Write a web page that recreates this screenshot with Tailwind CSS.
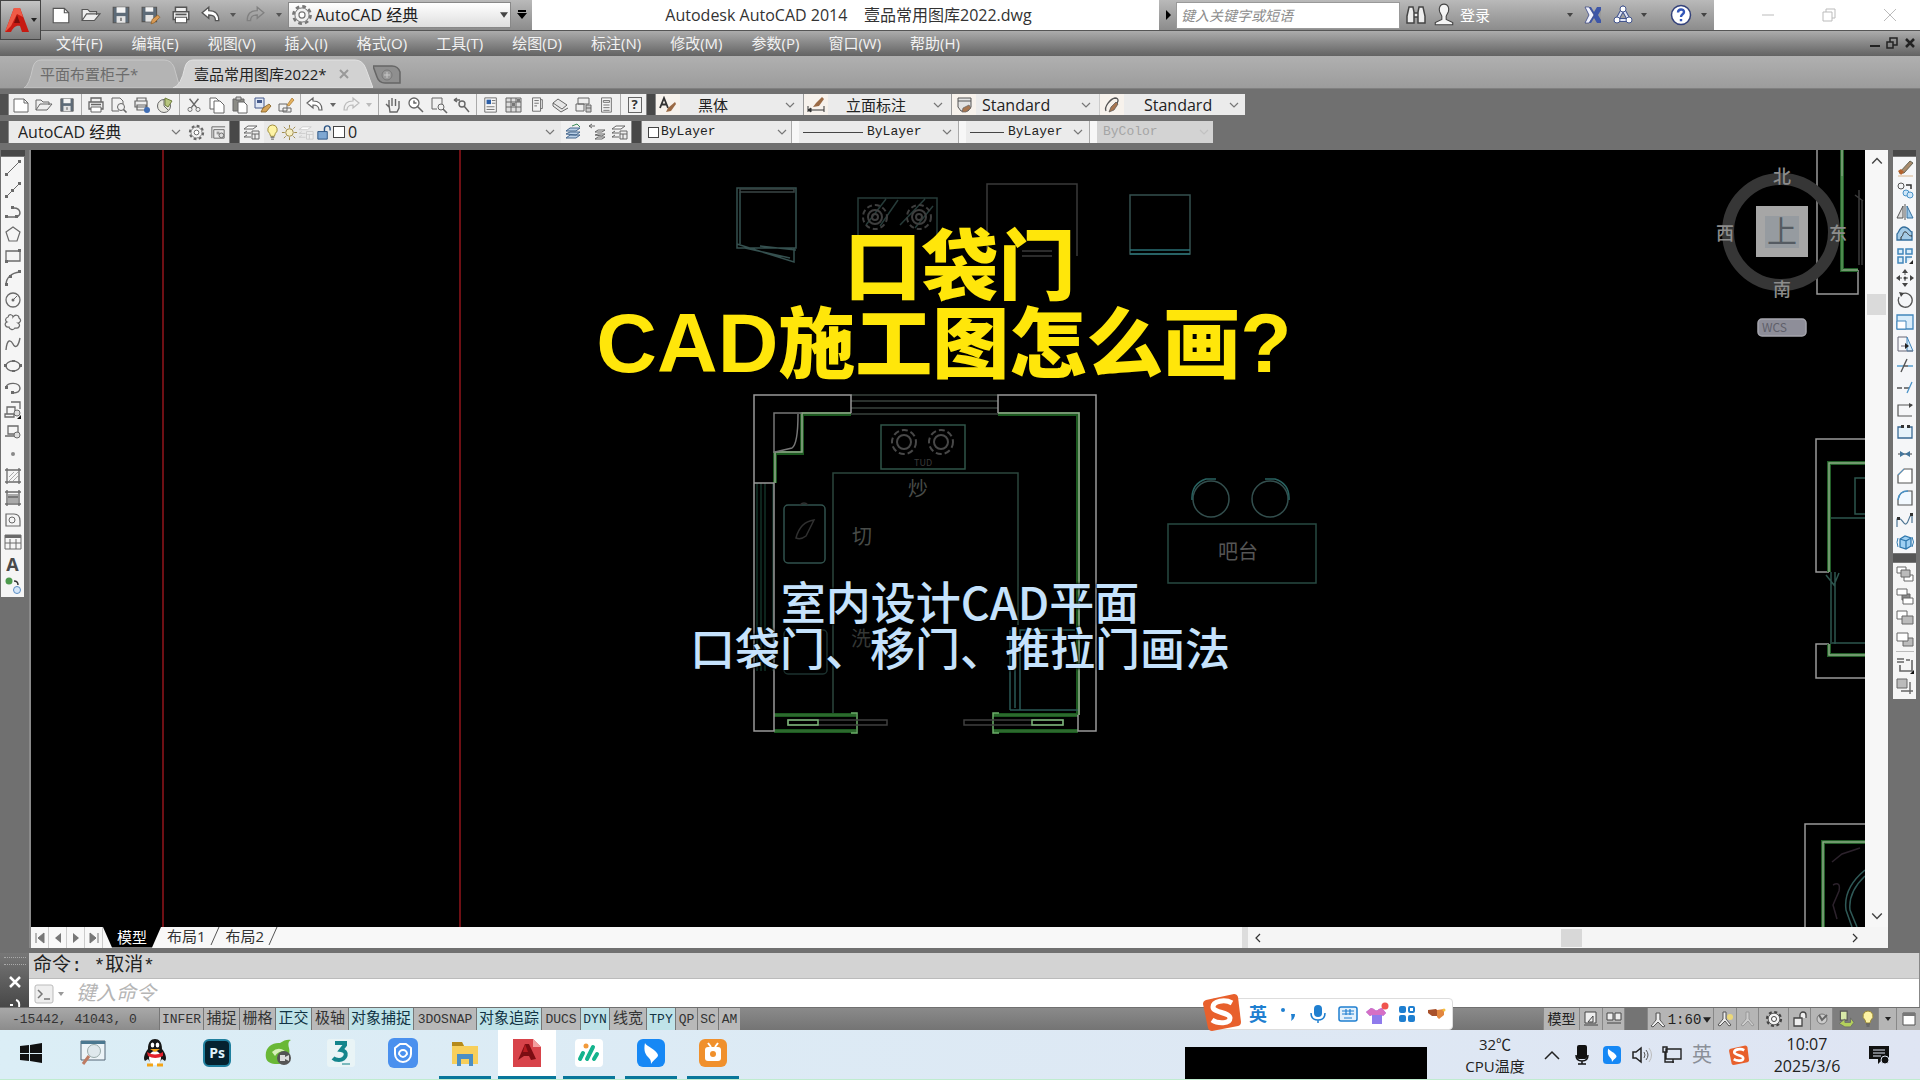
<!DOCTYPE html>
<html lang="zh-CN">
<head>
<meta charset="utf-8">
<meta name="viewport" content="width=device-width, initial-scale=1">
<title>Autodesk AutoCAD 2014 壹品常用图库2022.dwg</title>
<script src="https://cdn.jsdelivr.net/npm/@tailwindcss/browser@4"></script>
</head>
<body class="relative flex min-h-screen flex-col overflow-x-hidden bg-[#707070] font-['Open_Sans','Noto_Sans_CJK_SC',sans-serif] text-[15px] leading-5 text-[#222]">

<!-- Shared icon symbols -->
<svg class="hidden" aria-hidden="true">
  <defs>
    <symbol id="new" viewBox="0 0 18 18"><path d="M2 3h10l4 4v9H2z" fill="#fff" stroke="currentColor"/><path d="M12 3v4h4" fill="none" stroke="currentColor"/></symbol>
    <symbol id="open" viewBox="0 0 18 18"><path d="M1 14V4h5l2 2h6v3M1 14l4-6h12l-5 6z" fill="#eee" stroke="currentColor"/></symbol>
    <symbol id="save" viewBox="0 0 18 18"><path d="M2 2h14v14H2z" fill="#5d6b78" stroke="currentColor"/><path d="M5 2h8v5H5z" fill="#f4f4f4"/><path d="M5 10h8v6H5z" fill="#e4e4e4"/><path d="M9 11.500v3" stroke="#444"/></symbol>
    <symbol id="saveas" viewBox="0 0 18 18"><path d="M1 2h13v13H1z" fill="#5d6b78" stroke="currentColor"/><path d="M4 2h7v4H4z" fill="#f4f4f4"/><path d="M4 9h7v6H4z" fill="#e4e4e4"/><path d="M9 17l1-4 5-4 2 2-5 5z" fill="#d99a55" stroke="#8a5a20" stroke-width=".6"/></symbol>
    <symbol id="print" viewBox="0 0 18 18"><path d="M4 6V2h10v4M2 6h14v7H2z" fill="#eee" stroke="currentColor" stroke-width="1.300"/><path d="M4 11h10v5H4z" fill="#fff" stroke="currentColor"/><path d="M4 8.500h10" stroke="currentColor" stroke-width="1.500"/></symbol>
    <symbol id="preview" viewBox="0 0 18 18"><path d="M9 15H2V2h8l3 3v3" fill="none" stroke="currentColor"/><circle cx="11" cy="11" r="3.500" fill="none" stroke="currentColor"/><path d="M13.500 13.500l3 3" stroke="currentColor" stroke-width="1.600"/></symbol>
    <symbol id="publish" viewBox="0 0 18 18"><path d="M4 5V2h9v3M2 5h12v6H2zM4 9h9v5H4z" fill="#eee" stroke="currentColor" stroke-width="1.200"/><circle cx="14" cy="14" r="3" fill="#3f6db5"/></symbol>
    <symbol id="globe" viewBox="0 0 18 18"><circle cx="8" cy="10" r="6.500" fill="#e8e8e0" stroke="currentColor"/><path d="M8 10V4M8 10l4 4" stroke="currentColor"/><path d="M9 2l7 3-4 6-3-2z" fill="#b7c67e" stroke="#6e7d3c"/></symbol>
    <symbol id="cut" viewBox="0 0 18 18"><path d="M4 2l8 10M14 2L6 12" stroke="currentColor" stroke-width="1.600"/><circle cx="4.500" cy="14" r="2.300" fill="none" stroke="currentColor"/><circle cx="13.500" cy="14" r="2.300" fill="none" stroke="currentColor"/></symbol>
    <symbol id="copy" viewBox="0 0 18 18"><path d="M2 2h6l3 3v8H2z" fill="#fff" stroke="currentColor"/><path d="M6 5h6l4 4v8H6z" fill="#fff" stroke="currentColor"/></symbol>
    <symbol id="paste" viewBox="0 0 18 18"><path d="M2 3h11v12H2z" fill="#8b8b85" stroke="currentColor"/><path d="M5 1h5v3H5z" fill="#ccc" stroke="currentColor"/><path d="M7 6h6l3 3v8H7z" fill="#fff" stroke="currentColor"/></symbol>
    <symbol id="match" viewBox="0 0 18 18"><path d="M1 2h9v10H1z" fill="#dfe7f5" stroke="#44598a"/><path d="M3 4h5v3H3z" fill="#44598a"/><path d="M7 16l2-4 6-4 2 2-5 6z" fill="#d7a558" stroke="#7f5a1d" stroke-width=".8"/></symbol>
    <symbol id="block" viewBox="0 0 18 18"><path d="M2 8h8v7H2zM6 12h8v4H6z" fill="none" stroke="currentColor"/><path d="M10 9l5-7 2 2-5 6z" fill="#e5b260" stroke="#a3742b" stroke-width=".7"/></symbol>
    <symbol id="undo" viewBox="0 0 18 18"><path d="M1 7l6-5v3c6 0 9 3 9 9h-3c0-4-2-5-6-5v3z" fill="#fff" stroke="currentColor" stroke-width="1.200"/></symbol>
    <symbol id="redo" viewBox="0 0 18 18"><path d="M17 7l-6-5v3c-6 0-9 3-9 9h3c0-4 2-5 6-5v3z" fill="none" stroke="currentColor" stroke-width="1.200"/></symbol>
    <symbol id="pan" viewBox="0 0 18 18"><path d="M5 11L2 8m3 3V4m0 5l1 7h7l2-4V5m-7 5V2m3.500 8V3M15 5v5" fill="none" stroke="currentColor" stroke-width="1.400"/></symbol>
    <symbol id="zoom" viewBox="0 0 18 18"><circle cx="7" cy="7" r="5" fill="#fff" stroke="currentColor" stroke-width="1.300"/><path d="M10 10l6 6M7 4.500V7h2.500" fill="none" stroke="currentColor" stroke-width="1.500"/></symbol>
    <symbol id="zoomwin" viewBox="0 0 18 18"><path d="M2 2h10v6M2 2v11h5" fill="none" stroke="currentColor"/><circle cx="11" cy="11" r="3" fill="none" stroke="currentColor"/><path d="M13 13l4 4" stroke="currentColor" stroke-width="1.600"/></symbol>
    <symbol id="zoomprev" viewBox="0 0 18 18"><circle cx="9" cy="8" r="3" fill="none" stroke="currentColor" stroke-width="1.400"/><path d="M11 10l5 6M1 4h6M1 4l3-2M1 4l3 2" fill="none" stroke="currentColor" stroke-width="1.500"/></symbol>
    <symbol id="props" viewBox="0 0 18 18"><path d="M2 1h13v16H2z" fill="#f7f7f7" stroke="currentColor"/><path d="M4 3h5v5H4z" fill="#2c5fa8"/><path d="M10 4h4M10 7h4M4 11h9M4 14h9" stroke="currentColor"/></symbol>
    <symbol id="dc" viewBox="0 0 18 18"><path d="M1 2h15v14H1zM6 2v14M11 2v14M1 6h15M1 11h15" fill="#ddd" stroke="currentColor"/><path d="M7 7h3v3H7zM12 3h3v3h-3z" fill="#777"/></symbol>
    <symbol id="palette" viewBox="0 0 18 18"><path d="M4 1h9v15H4z" fill="#f2f2f2" stroke="currentColor"/><path d="M6 4h5M6 7h5M6 10h3" stroke="currentColor"/><path d="M13 3h2v10h-2" fill="none" stroke="currentColor"/></symbol>
    <symbol id="sheet" viewBox="0 0 18 18"><path d="M2 7l5-4 9 6-5 4zM2 10l8 6 7-4M2 7v3" fill="#e6e6e6" stroke="currentColor"/></symbol>
    <symbol id="markup" viewBox="0 0 18 18"><path d="M4 2h11v6H4zM2 8h8v7H2z" fill="#eee" stroke="currentColor"/><path d="M12 9h5v7h-5zM12 12h5" fill="#ccc" stroke="currentColor"/></symbol>
    <symbol id="calc" viewBox="0 0 18 18"><path d="M4 1h11v16H4z" fill="#f5f5f5" stroke="currentColor"/><path d="M6 4h7v2H6zM6 9h7M6 12h7M6 15h7" fill="none" stroke="currentColor"/></symbol>
    <symbol id="gear" viewBox="0 0 18 18"><circle cx="9" cy="9" r="7" fill="none" stroke="currentColor" stroke-width="2.200" stroke-dasharray="3 2.500"/><circle cx="9" cy="9" r="5.800" fill="#f2f2f2" stroke="currentColor" stroke-width=".8"/><circle cx="9" cy="9" r="2.500" fill="#fff" stroke="currentColor"/></symbol>
    <symbol id="ws" viewBox="0 0 18 18"><path d="M2 3h14M4 6h11v9H4zM2 3v12" fill="none" stroke="currentColor"/><path d="M7 8h3v3H7z" fill="#999"/><circle cx="12" cy="12" r="2.500" fill="#ddd" stroke="currentColor"/></symbol>
    <symbol id="layers" viewBox="0 0 18 18"><path d="M1 6l4-3h9l-4 3zM1 10l3-2M1 14l3-2M1 10h7M1 14h7" fill="#fff" stroke="currentColor"/><path d="M9 8h7v8H9zM9 11h7M12 11v5" fill="#eee" stroke="currentColor"/></symbol>
    <symbol id="layerblue" viewBox="0 0 18 18"><path d="M2 8l4-3h10l-4 3zM2 11l4-2h10l-4 3zM2 15l4-3h10l-4 3z" fill="#b9cfe6" stroke="#44668c"/><path d="M8 3l5-2 3 3" fill="none" stroke="#3a8a55"/></symbol>
    <symbol id="layerprev" viewBox="0 0 18 18"><path d="M1 3h6M1 3l3-2M1 3l3 2M7 9l3-2h7l-3 2zM7 12l3-1h7l-3 2zM7 16l3-2h7l-3 2z" fill="none" stroke="currentColor"/></symbol>
    <symbol id="bulb" viewBox="0 0 18 18"><path d="M9 1a5 5 0 0 1 3 9l-1 3H7l-1-3a5 5 0 0 1 3-9z" fill="#fdf3a4" stroke="#9b8a3a"/><path d="M7 14h4M7.500 16h3" stroke="#555"/></symbol>
    <symbol id="sun" viewBox="0 0 18 18"><circle cx="9" cy="9" r="4" fill="#f6efc4" stroke="#9c8745"/><path d="M9 1v3M9 14v3M1 9h3M14 9h3M3 3l2 2M13 13l2 2M15 3l-2 2M3 15l2-2" stroke="#9c8745"/></symbol>
    <symbol id="lockblue" viewBox="0 0 18 18"><path d="M3 8h10v8H3z" fill="#7ea7d2" stroke="#2b5484"/><path d="M10 8V5a3 3 0 0 1 6 0v2" fill="none" stroke="#2b5484" stroke-width="1.500"/></symbol>
    <symbol id="chev" viewBox="0 0 10 10"><path d="M1 3l4 4 4-4" fill="none" stroke="currentColor" stroke-width="1.200"/></symbol>
    <symbol id="dot" viewBox="0 0 6 6"><path d="M0 1h6L3 5z" fill="currentColor"/></symbol>
    <symbol id="order" viewBox="0 0 18 18"><path d="M1 2h9v6H1z" fill="#fff" stroke="currentColor"/><path d="M8 10h9v6H8z" fill="#fff" stroke="currentColor"/><path d="M5 5h9v7H5z" fill="#bbb" stroke="currentColor"/></symbol>
    <symbol id="orderb" viewBox="0 0 18 18"><path d="M6 7h8v6H6z" fill="#888" stroke="currentColor"/><path d="M1 2h10v6H1zM7 11h10v6H7z" fill="#fff" stroke="currentColor"/></symbol>
    <symbol id="orderc" viewBox="0 0 18 18"><path d="M1 2h10v8H1z" fill="#fff" stroke="currentColor"/><path d="M6 7h11v8H6z" fill="#bbb" stroke="currentColor"/></symbol>
    <symbol id="orderd" viewBox="0 0 18 18"><path d="M7 7h10v8H7z" fill="#bbb" stroke="currentColor"/><path d="M1 2h11v8H1z" fill="#fff" stroke="currentColor"/></symbol>
    <symbol id="sogou" viewBox="0 0 38 38"><path d="M3 7L31 1q3 0 4 3l3 25q0 3-3 4L9 38q-3 0-4-3L0 11q0-3 3-4z" fill="#e8602c"/><path d="M29 10C22 6 10 8 10 14s17 5 17 11-12 6-18 2" fill="none" stroke="#fff" stroke-width="5"/></symbol>
    <symbol id="bird" viewBox="0 0 28 28"><rect width="28" height="28" rx="6" fill="#1688f5"/><path d="M8 4c1 3 12 7 13 12 0 3-4 4-7 9 0-4-1-5-3-7-4-4-4-9-3-14z" fill="#fff"/></symbol>
  </defs>
</svg>

<!-- Title bar -->
<header class="flex h-[31px] shrink-0 items-stretch border-b border-[#555] bg-white">
  <div class="flex flex-none items-center bg-linear-to-b from-[#b9b9b9] to-[#8c8c8c] text-[#555]">
    <button aria-label="应用程序菜单" class="z-10 -mb-2.5 flex h-10 w-[41px] flex-none items-center self-start border border-[#444] bg-linear-to-b from-[#c4c4c4] to-[#7d7d7d] pl-1">
      <svg class="h-8 w-6" viewBox="0 0 24 32"><path d="M0 28L9 4h6l9 24h-7l-2-6c-4-1-7 2-9 6z" fill="#c71a12"/><path d="M9 4h6l3 9-6-3-6 12-6 6z" fill="#ef5a46"/><path d="M12 11l3 8H9z" fill="#7c0d09"/></svg>
      <svg class="ml-0.5 size-1.5 text-[#222]"><use href="#dot"/></svg>
    </button>
    <div class="flex items-center pl-[5px]">
      <button aria-label="新建" class="grid w-[30px] place-items-center"><svg class="size-5"><use href="#new"/></svg></button>
      <button aria-label="打开" class="grid w-[30px] place-items-center"><svg class="size-5"><use href="#open"/></svg></button>
      <button aria-label="保存" class="grid w-[30px] place-items-center"><svg class="size-5"><use href="#save"/></svg></button>
      <button aria-label="另存为" class="grid w-[30px] place-items-center"><svg class="size-5"><use href="#saveas"/></svg></button>
      <button aria-label="打印" class="grid w-[30px] place-items-center"><svg class="size-5"><use href="#print"/></svg></button>
      <button aria-label="放弃" class="grid w-[30px] place-items-center"><svg class="size-5"><use href="#undo"/></svg></button>
      <svg class="mx-1 size-1.5"><use href="#dot"/></svg>
      <button aria-label="重做" class="grid w-[30px] place-items-center text-[#808080]"><svg class="size-5"><use href="#redo"/></svg></button>
      <svg class="mx-1.5 size-1.5"><use href="#dot"/></svg>
    </div>
    <div class="flex h-[26px] w-[223px] items-center gap-0.5 border border-[#888] bg-linear-to-b from-white to-[#dedede] px-0.5 text-[#777]">
      <svg class="size-[22px] flex-none"><use href="#gear"/></svg>
      <select aria-label="工作空间" class="min-w-0 flex-1 appearance-none bg-transparent text-[16px] text-[#222]"><option>AutoCAD 经典</option></select>
      <svg class="size-2 flex-none text-[#444]"><use href="#dot"/></svg>
    </div>
    <button aria-label="自定义" class="grid w-[21px] place-items-center text-black"><svg class="size-3" viewBox="0 0 12 12"><path d="M2 1h8v2H2zM1 4h10l-5 6z" fill="currentColor"/></svg></button>
  </div>
  <h1 class="flex min-w-0 flex-1 items-center justify-center truncate pl-1.5 text-[16px] whitespace-pre text-[#333]">Autodesk AutoCAD 2014    壹品常用图库2022.dwg</h1>
  <div class="flex flex-none items-center bg-linear-to-b from-[#b9b9b9] to-[#8c8c8c] text-[#444]">
    <button aria-label="展开搜索" class="grid w-[17px] place-items-center text-black"><svg class="size-2.5" viewBox="0 0 10 10"><path d="M3 0l5 5-5 5z" fill="currentColor"/></svg></button>
    <input aria-label="搜索" placeholder="键入关键字或短语" class="h-[27px] w-[224px] border border-[#999] bg-white px-1 text-[14px] italic placeholder:text-[#8c8c8c]">
    <button aria-label="查找" class="ml-1 grid w-6 place-items-center"><svg class="size-5" viewBox="0 0 20 20"><path d="M3 2h4l1 5v11H1v-7zM13 2h4l2 9v7h-7V7zM8 8h4v4H8z" fill="#eee" stroke="currentColor" stroke-width="1.500"/></svg></button>
    <button class="ml-1 flex w-[135px] items-center gap-1 text-[15px] text-white"><svg class="size-6" viewBox="0 0 22 22"><path d="M11 1c4 0 5 4 4 7l-2 4v3l6 3v2H3v-2l6-3v-3L7 8c-1-3 0-7 4-7z" fill="#f4f4f4" stroke="#444"/></svg>登录</button>
    <svg class="size-1.5"><use href="#dot"/></svg>
    <button aria-label="Exchange" class="ml-2 grid w-6 place-items-center"><svg class="size-[18px]" viewBox="0 0 18 18"><path d="M1 1h6l3 5 3-5h4v16h-4l-3-5-3 5H1l4-8z" fill="#3d56a8"/><path d="M1 1h4l5 8-5 8H1l4-8z" fill="#f1f3ff" stroke="#33417a" stroke-width=".7"/><path d="M17 4l-3 5 3 5z" fill="#9a9a9a"/></svg></button>
    <button aria-label="A360" class="ml-1.5 grid w-6 place-items-center"><svg class="size-5" viewBox="0 0 20 20"><path d="M10 4L4 15h12z" fill="none" stroke="#44568e" stroke-width="4"/><path d="M10 4L4 15h12z" fill="none" stroke="#dfe4f5" stroke-width="2"/><circle cx="10" cy="4" r="3" fill="#fff" stroke="#44568e"/><circle cx="4" cy="15" r="3" fill="#fff" stroke="#44568e"/><circle cx="16" cy="15" r="3" fill="#fff" stroke="#44568e"/></svg></button>
    <svg class="ml-1.5 size-1.5"><use href="#dot"/></svg>
    <button aria-label="帮助" class="ml-[22px] grid w-6 place-items-center"><svg class="size-[22px]" viewBox="0 0 22 22"><circle cx="11" cy="11" r="9.500" fill="#fff" stroke="#33417a" stroke-width="1.500"/><path d="M8 8.500c0-4 6-4 6-.5 0 2.500-3 2-3 5M11 15v2.200" fill="none" stroke="#3356b8" stroke-width="2.400"/></svg></button>
    <svg class="mr-[7px] ml-2 size-1.5"><use href="#dot"/></svg>
  </div>
  <div class="flex w-[206px] flex-none items-center justify-around pl-6 text-[#bbb]">
    <button aria-label="最小化" class="grid w-[50px] place-items-center"><svg class="size-3" viewBox="0 0 12 12"><path d="M0 6h12" stroke="currentColor"/></svg></button>
    <button aria-label="还原" class="grid w-[50px] place-items-center"><svg class="size-3.5" viewBox="0 0 14 14"><path d="M1 4h9v9H1zM4 4V1h9v9h-3" fill="none" stroke="currentColor"/></svg></button>
    <button aria-label="关闭" class="grid w-[50px] place-items-center"><svg class="size-3" viewBox="0 0 12 12"><path d="M0 0l12 12M12 0L0 12" stroke="currentColor"/></svg></button>
  </div>
</header>

<!-- Menu bar -->
<nav class="flex h-[25px] shrink-0 items-center gap-[29px] bg-linear-to-b from-[#acacac] to-[#636363] pr-1 pb-0.5 pl-14 text-[15px] whitespace-nowrap text-[#f2f2f2]">
  <a href="#">文件(F)</a><a href="#">编辑(E)</a><a href="#">视图(V)</a><a href="#">插入(I)</a><a href="#">格式(O)</a><a href="#">工具(T)</a><a href="#">绘图(D)</a><a href="#">标注(N)</a><a href="#">修改(M)</a><a href="#">参数(P)</a><a href="#">窗口(W)</a><a href="#">帮助(H)</a>
  <div class="ml-auto flex items-center gap-1.5 text-[#222]">
    <button aria-label="最小化图形"><svg class="size-2.5" viewBox="0 0 10 10"><path d="M0 8h10" stroke="currentColor" stroke-width="2"/></svg></button>
    <button aria-label="还原图形"><svg class="size-3" viewBox="0 0 12 12"><path d="M1 5h6v6H1zM4 5V1h7v7H7" fill="none" stroke="currentColor" stroke-width="1.500"/></svg></button>
    <button aria-label="关闭图形"><svg class="size-3" viewBox="0 0 12 12"><path d="M2 2l8 8M10 2l-8 8" stroke="currentColor" stroke-width="2.500"/></svg></button>
  </div>
</nav>

<!-- Drawing tabs -->
<div class="flex h-[33px] shrink-0 items-end border-b border-[#808080] bg-linear-to-b from-[#b0b0b0] to-[#9c9c9c] pl-6 text-[15px]">
  <div class="grid h-[29px] w-[156px] items-center">
    <svg class="col-start-1 row-start-1 h-full w-full" viewBox="0 0 156 29" preserveAspectRatio="none"><path d="M0 29Q5 27 9 8 11 1 17 1h123q7 0 10 7l6 21z" fill="#b4b4b4" stroke="#c8c8c8"/></svg>
    <a href="#" class="col-start-1 row-start-1 pl-4 text-[#6c6c6c]">平面布置柜子*</a>
  </div>
  <div class="-ml-[7px] grid h-[29px] w-[200px] items-center">
    <svg class="col-start-1 row-start-1 h-full w-full" viewBox="0 0 200 29" preserveAspectRatio="none"><path d="M0 29Q8 27 12 8 14 1 20 1h162q8 0 11 9l7 19z" fill="#d2d2d2" stroke="#e2e2e2"/></svg>
    <div class="col-start-1 row-start-1 flex items-center justify-between pr-6 pl-[21px]"><a href="#" class="text-[#222]">壹品常用图库2022*</a><button aria-label="关闭标签"><svg class="size-2.5 text-[#999]" viewBox="0 0 10 10"><path d="M1 1l8 8M9 1L1 9" stroke="currentColor" stroke-width="2"/></svg></button></div>
  </div>
  <button aria-label="新图形" class="mb-1"><svg class="h-[19px] w-7" viewBox="0 0 28 19"><path d="M0 1h19q6 0 8 6v11H12q-6 0-8-6z" fill="#8f8f8f" stroke="#666" stroke-width="1.500"/><circle cx="14" cy="10" r="5" fill="#9a9a9a" stroke="#777"/><path d="M14 7v6M11 10h6" stroke="#c8c8c8"/></svg></button>
</div>

<!-- Toolbars -->
<div class="flex h-[61px] shrink-0 flex-col gap-1.5 bg-[#707070] pt-[5px] text-[#666]">
  <div class="flex h-[21px] items-stretch">
    <div class="w-[9px] border-r border-[#888] bg-[#505050]"></div>
    <div class="flex items-center bg-[#f1f1f1] *:grid *:place-items-center">
      <button aria-label="新建" class="w-[23px]"><svg class="size-[18px]"><use href="#new"/></svg></button>
      <button aria-label="打开" class="w-[23px]"><svg class="size-[18px]"><use href="#open"/></svg></button>
      <button aria-label="保存" class="w-[23px]"><svg class="size-4"><use href="#save"/></svg></button>
      <i class="h-full w-1.5"><b class="h-full w-px bg-[#aaa]"></b></i>
      <button aria-label="打印" class="w-[23px]"><svg class="size-[18px]"><use href="#print"/></svg></button>
      <button aria-label="预览" class="w-[23px]"><svg class="size-[18px]"><use href="#preview"/></svg></button>
      <button aria-label="发布" class="w-[23px]"><svg class="size-[18px]"><use href="#publish"/></svg></button>
      <button aria-label="三维DWF" class="w-[23px]"><svg class="size-[18px]"><use href="#globe"/></svg></button>
      <i class="h-full w-1.5"><b class="h-full w-px bg-[#aaa]"></b></i>
      <button aria-label="剪切" class="w-[23px]"><svg class="size-4"><use href="#cut"/></svg></button>
      <button aria-label="复制" class="w-[23px]"><svg class="size-[18px]"><use href="#copy"/></svg></button>
      <button aria-label="粘贴" class="w-[23px]"><svg class="size-[18px]"><use href="#paste"/></svg></button>
      <button aria-label="特性匹配" class="w-[23px]"><svg class="size-[18px]"><use href="#match"/></svg></button>
      <button aria-label="块编辑器" class="w-[23px]"><svg class="size-[18px]"><use href="#block"/></svg></button>
      <i class="h-full w-1.5"><b class="h-full w-px bg-[#aaa]"></b></i>
      <button aria-label="放弃" class="w-[23px]"><svg class="size-[18px]"><use href="#undo"/></svg></button>
      <i class="w-[13px]"><svg class="size-1.5"><use href="#dot"/></svg></i>
      <button aria-label="重做" class="w-[23px] text-[#bbb]"><svg class="size-[18px]"><use href="#redo"/></svg></button>
      <i class="w-[13px] text-[#bbb]"><svg class="size-1.5"><use href="#dot"/></svg></i>
      <i class="h-full w-1.5"><b class="h-full w-px bg-[#aaa]"></b></i>
      <button aria-label="平移" class="w-[23px]"><svg class="size-[18px]"><use href="#pan"/></svg></button>
      <button aria-label="缩放" class="w-[23px]"><svg class="size-[18px]"><use href="#zoom"/></svg></button>
      <button aria-label="窗口缩放" class="w-[23px]"><svg class="size-[18px]"><use href="#zoomwin"/></svg></button>
      <button aria-label="缩放上一个" class="w-[23px]"><svg class="size-[18px]"><use href="#zoomprev"/></svg></button>
      <i class="h-full w-1.5"><b class="h-full w-px bg-[#aaa]"></b></i>
      <button aria-label="特性" class="w-[23px]"><svg class="size-4"><use href="#props"/></svg></button>
      <button aria-label="设计中心" class="w-[23px]"><svg class="size-[18px]"><use href="#dc"/></svg></button>
      <button aria-label="工具选项板" class="w-[23px]"><svg class="size-4"><use href="#palette"/></svg></button>
      <button aria-label="图纸集" class="w-[23px]"><svg class="size-[18px]"><use href="#sheet"/></svg></button>
      <button aria-label="标记集" class="w-[23px]"><svg class="size-[18px]"><use href="#markup"/></svg></button>
      <button aria-label="计算器" class="w-[23px]"><svg class="size-4"><use href="#calc"/></svg></button>
      <i class="h-full w-1.5"><b class="h-full w-px bg-[#aaa]"></b></i>
      <button aria-label="帮助" class="w-[23px]"><b class="grid h-4 w-3.5 place-items-center border border-[#666] text-[13px] leading-none text-[#333]">?</b></button>
    </div>
    <div class="w-[10px] border-x border-[#888] bg-[#484848]"></div>
    <div class="flex items-stretch bg-[#ebebeb] text-[15px] text-[#222]">
      <div class="flex w-[148px] items-center border-r border-[#999]"><span class="grid h-full w-6 place-items-center bg-[#f7f2ec]"><svg class="size-[18px]" viewBox="0 0 18 18"><path d="M1 12L5 2l4 10M2.500 8.500h5" fill="none" stroke="#333" stroke-width="1.800"/><path d="M7 16l2-4 7-6 1 2-5 7z" fill="#9b6a44"/></svg></span><select aria-label="文字样式" class="min-w-0 flex-1 appearance-none pl-[18px]"><option>黑体</option></select><svg class="mr-2 size-2.5 text-[#777]"><use href="#chev"/></svg></div>
      <div class="flex w-[148px] items-center border-r border-[#999]"><span class="grid h-full w-6 place-items-center bg-[#f7f2ec]"><svg class="size-[18px]" viewBox="0 0 18 18"><path d="M1 10v6M17 10v6M1 14h16M1 14l3-2v4z" fill="#333" stroke="#333"/><path d="M6 11l3-4 6-6 2 2-5 7z" fill="#9b6a44"/></svg></span><select aria-label="标注样式" class="min-w-0 flex-1 appearance-none pl-[18px]"><option>立面标注</option></select><svg class="mr-2 size-2.5 text-[#777]"><use href="#chev"/></svg></div>
      <div class="flex w-[148px] items-center border-r border-[#ccc]"><span class="grid h-full w-6 place-items-center bg-[#f7f2ec]"><svg class="size-[18px]" viewBox="0 0 18 18"><path d="M3 2h13v9l-3 4H6l-3-4zM3 5h13" fill="#e3e3e3" stroke="#555"/><path d="M7 16l1-4 6-3 2 3-5 4z" fill="#a87650" stroke="#666" stroke-width=".7"/></svg></span><select aria-label="表格样式" class="min-w-0 flex-1 appearance-none pl-1.5 text-[16px]"><option>Standard</option></select><svg class="mr-2 size-2.5 text-[#777]"><use href="#chev"/></svg></div>
      <div class="flex w-[145px] items-center"><span class="grid h-full w-6 place-items-center bg-[#f7f2ec]"><svg class="size-[18px]" viewBox="0 0 18 18"><path d="M3 15c-2-4 4-12 9-13 5 0 3 5 0 8" fill="none" stroke="#555" stroke-width="1.300"/><path d="M6 16l2-5 5-5 2 2-4 6z" fill="#a87650" stroke="#555" stroke-width=".7"/></svg></span><select aria-label="引线样式" class="min-w-0 flex-1 appearance-none pl-5 text-[16px]"><option>Standard</option></select><svg class="mr-1.5 size-2.5 text-[#777]"><use href="#chev"/></svg></div>
    </div>
  </div>

  <div class="flex h-[22px] items-stretch">
    <div class="w-[9px] border-r border-[#888] bg-[#505050]"></div>
    <div class="flex w-[220px] items-center bg-[#ebebeb]">
      <select aria-label="工作空间" class="min-w-0 flex-1 appearance-none pl-[9px] text-[16px] text-[#222]"><option>AutoCAD 经典</option></select>
      <svg class="mr-1 size-2.5 text-[#777]"><use href="#chev"/></svg>
      <button aria-label="工作空间设置" class="grid w-[22px] place-items-center"><svg class="size-[17px]"><use href="#gear"/></svg></button>
      <button aria-label="我的工作空间" class="grid w-[22px] place-items-center"><svg class="size-[17px]"><use href="#ws"/></svg></button>
    </div>
    <div class="w-[11px] border-x border-[#888] bg-[#484848]"></div>
    <div class="flex w-[391px] items-center bg-[#f1f1f1]">
      <button aria-label="图层特性" class="grid w-6 place-items-center"><svg class="size-[18px]"><use href="#layers"/></svg></button>
      <div class="flex h-full flex-1 items-center bg-[#e9e9e9]">
        <svg class="size-[17px]"><use href="#bulb"/></svg><svg class="size-[17px]"><use href="#sun"/></svg><svg class="size-[17px] text-[#ccc]"><use href="#layers"/></svg><svg class="size-[17px]"><use href="#lockblue"/></svg>
        <i class="mx-px size-3 border border-[#444] bg-white"></i>
        <select aria-label="图层" class="min-w-0 flex-1 appearance-none pl-0.5 text-[16px] text-[#222]"><option>0</option></select>
        <svg class="mr-1.5 size-2.5 text-[#777]"><use href="#chev"/></svg>
      </div>
      <button aria-label="置为当前" class="grid w-6 place-items-center"><svg class="size-[18px]"><use href="#layerblue"/></svg></button>
      <button aria-label="上一个图层" class="grid w-6 place-items-center"><svg class="size-[18px]"><use href="#layerprev"/></svg></button>
      <button aria-label="图层状态" class="grid w-[22px] place-items-center"><svg class="size-[18px]"><use href="#layers"/></svg></button>
    </div>
    <div class="w-[11px] border-x border-[#888] bg-[#484848]"></div>
    <div class="flex items-stretch gap-[7px] bg-[#f7f7f7] font-['Liberation_Mono',monospace] text-[13px] text-[#222]">
      <div class="flex w-[150px] items-center border-r border-[#aaa] bg-[#ebebeb] pl-1.5"><i class="size-[11px] border border-[#444] bg-white"></i><select aria-label="颜色" class="min-w-0 flex-1 appearance-none pl-0.5"><option>ByLayer</option></select><svg class="mr-1 size-2.5 text-[#777]"><use href="#chev"/></svg></div>
      <div class="flex w-[160px] items-center border-r border-[#aaa] bg-[#ebebeb] pl-1"><i class="h-px w-[60px] bg-[#444]"></i><select aria-label="线型" class="min-w-0 flex-1 appearance-none pl-1"><option>ByLayer</option></select><svg class="mr-1.5 size-2.5 text-[#777]"><use href="#chev"/></svg></div>
      <div class="flex w-[124px] items-center border-r border-[#aaa] bg-[#ebebeb] pl-1"><i class="h-px w-[34px] bg-[#444]"></i><select aria-label="线宽" class="min-w-0 flex-1 appearance-none pl-1"><option>ByLayer</option></select><svg class="mr-1.5 size-2.5 text-[#777]"><use href="#chev"/></svg></div>
      <div class="flex w-[116px] items-center bg-[#d3d3d3] pl-1.5 text-[#a5a5a5]"><select aria-label="打印样式" disabled class="min-w-0 flex-1 appearance-none"><option>ByColor</option></select><svg class="mr-1 size-2.5 text-[#c2c2c2]"><use href="#chev"/></svg></div>
    </div>
  </div>
</div>

<!-- Workspace: draw toolbar, canvas, modify toolbar -->
<main class="flex min-h-[600px] flex-1">
  <aside class="w-[31px] flex-none border-r-2 border-[#8a8a8a] pl-px">
    <div class="h-[7px] w-6 border-b border-[#777] bg-[#484848]"></div>
    <div class="grid w-[23px] auto-rows-[22px] place-items-center bg-[#f5f5f5] text-[#6a6a6a]">
      <button aria-label="直线"><svg class="size-[18px]" viewBox="0 0 18 18"><path d="M2 16L16 2" stroke="currentColor"/><path d="M1 14h3v3H1zM14 1h3v3h-3z" fill="currentColor"/></svg></button>
      <button aria-label="构造线"><svg class="size-[18px]" viewBox="0 0 18 18"><path d="M2 16L16 2" stroke="currentColor"/><path d="M1 14h3v3H1zM7 8h3v3H7zM14 1h3v3h-3z" fill="currentColor"/></svg></button>
      <button aria-label="多段线"><svg class="size-[18px]" viewBox="0 0 18 18"><path d="M2 14h10c6-1 5-9-2-9H8" fill="none" stroke="currentColor" stroke-width="1.500"/><path d="M1 12h3v3H1zM7 3h3v3H7zM11 12h3v3h-3z" fill="currentColor"/></svg></button>
      <button aria-label="正多边形"><svg class="size-[18px]" viewBox="0 0 18 18"><path d="M9 2l7 5-3 9H5L2 7z" fill="none" stroke="currentColor" stroke-width="1.200"/></svg></button>
      <button aria-label="矩形"><svg class="size-[18px]" viewBox="0 0 18 18"><path d="M2 4h14v10H2z" fill="none" stroke="currentColor" stroke-width="1.300"/><path d="M1 13h3v3H1zM14 2h3v3h-3z" fill="currentColor"/></svg></button>
      <button aria-label="圆弧"><svg class="size-[18px]" viewBox="0 0 18 18"><path d="M2 16C2 9 7 4 16 3" fill="none" stroke="currentColor" stroke-width="1.500"/><path d="M1 14h3v3H1zM5 6h3v3H5zM14 1h3v3h-3z" fill="currentColor"/></svg></button>
      <button aria-label="圆"><svg class="size-[18px]" viewBox="0 0 18 18"><circle cx="9" cy="9" r="7" fill="none" stroke="currentColor" stroke-width="1.300"/><path d="M9 9l4-4" stroke="currentColor"/><circle cx="9" cy="9" r="1.500" fill="currentColor"/></svg></button>
      <button aria-label="修订云线"><svg class="size-[18px]" viewBox="0 0 18 18"><path d="M4 4c1-4 5-2 5 0 2-3 6-2 6 1 3 2 1 5-1 5 3 2 1 6-3 5-2 3-6 1-6-1-4 1-5-4-2-5-2-1-2-4 1-5z" fill="none" stroke="currentColor" stroke-width="1.200"/></svg></button>
      <button aria-label="样条曲线"><svg class="size-[18px]" viewBox="0 0 18 18"><path d="M2 15C3 3 7 5 9 9s5 4 7-6" fill="none" stroke="currentColor" stroke-width="1.400"/></svg></button>
      <button aria-label="椭圆"><svg class="size-[18px]" viewBox="0 0 18 18"><ellipse cx="9" cy="9" rx="7" ry="5" fill="none" stroke="currentColor" stroke-width="1.400"/><path d="M0 7h3v3H0zM15 7h3v3h-3zM8 3h3v2H8zM8 13h3v2H8z" fill="currentColor"/></svg></button>
      <button aria-label="椭圆弧"><svg class="size-[18px]" viewBox="0 0 18 18"><path d="M2 8c2-5 13-5 14 1 0 4-4 5-7 5" fill="none" stroke="currentColor" stroke-width="1.400"/><path d="M1 7h3v3H1zM7 12h3v3H7z" fill="currentColor"/></svg></button>
      <button aria-label="插入块"><svg class="size-[18px]" viewBox="0 0 18 18"><path d="M7 1h9v7M3 6h8v7H3zM1 13h9v3H1z" fill="none" stroke="currentColor" stroke-width="1.300"/><circle cx="13" cy="12" r="3" fill="#ddd" stroke="currentColor"/><path d="M13 18h4v-4z" fill="#111"/></svg></button>
      <button aria-label="创建块"><svg class="size-[18px]" viewBox="0 0 18 18"><path d="M4 3h10v8H4zM1 13h9" fill="none" stroke="currentColor" stroke-width="1.300"/><circle cx="13" cy="12" r="3" fill="#ddd" stroke="currentColor"/></svg></button>
      <button aria-label="点"><svg class="size-[18px]" viewBox="0 0 18 18"><circle cx="9" cy="9" r="2" fill="#888"/></svg></button>
      <button aria-label="图案填充"><svg class="size-[18px]" viewBox="0 0 18 18"><path d="M3 1v16M15 1v16M1 3h16M1 15h16" stroke="currentColor" stroke-width="1.300"/><path d="M5 14L14 5M5 10l5-5M9 14l5-5" stroke="#aaa"/></svg></button>
      <button aria-label="渐变色"><svg class="size-[18px]" viewBox="0 0 18 18"><path d="M4 5h10v9H4z" fill="#aaa"/><path d="M3 1v16M15 1v16M1 3h16M1 15h16M4 8h10" stroke="currentColor" stroke-width="1.400"/></svg></button>
      <button aria-label="面域"><svg class="size-[18px]" viewBox="0 0 18 18"><path d="M2 3h8c4 0 6 3 6 7v5H2z" fill="none" stroke="currentColor" stroke-width="1.200"/><circle cx="8" cy="9" r="3" fill="none" stroke="currentColor"/></svg></button>
      <button aria-label="表格"><svg class="size-[18px]" viewBox="0 0 18 18"><path d="M1 2h16v14H1zM1 10h16M6 6v10M12 6v10" fill="none" stroke="currentColor"/><path d="M1 2h16v3H1z" fill="currentColor"/></svg></button>
      <button aria-label="多行文字" class="text-[18px] leading-none font-bold text-[#4a4a4a]">A</button>
      <button aria-label="添加选定对象"><svg class="size-[18px]" viewBox="0 0 18 18"><circle cx="5" cy="4" r="3.500" fill="#4d9a4d"/><path d="M10 4c3 0 4 1 4 4" fill="none" stroke="#333" stroke-width="1.500"/><circle cx="13" cy="13" r="3.500" fill="#d5e6f8" stroke="#5b8ec4"/></svg></button>
    </div>
  </aside>

  <section class="flex min-w-0 flex-1 flex-col" aria-label="绘图区">
    <div class="flex min-h-0 flex-1">
      <div class="relative min-w-0 flex-1 bg-black">
        <svg class="absolute inset-0 h-full w-full font-['Noto_Sans_CJK_SC',sans-serif]" viewBox="31 150 1834 777" preserveAspectRatio="xMidYMid slice" fill="none" stroke-width="1.500">
          <path d="M163 150v777M460 150v777" stroke="#93141b"/>
          <!-- appliance blocks -->
          <g stroke="#35504f">
            <path d="M737 188h59v60h-59zM740 192v52M737 244l57 18v-14M745 248l45 10M760 246l36 4"/><path d="M740 189h54v3h-54z" stroke="#3a4646"/>
            <path d="M858 250v-52h79v52M866 225l20-26M900 225l25-26M880 226l18-26M915 228l18-22" stroke="#263b39"/>
            <g stroke="#3e3e3e" stroke-width="2"><circle cx="875" cy="217" r="12" stroke-dasharray="5 3"/><circle cx="875" cy="217" r="7"/><circle cx="875" cy="217" r="3"/><circle cx="919" cy="217" r="12" stroke-dasharray="5 3"/><circle cx="919" cy="217" r="7"/><circle cx="919" cy="217" r="3"/></g>
            <path d="M987 256v-72h90v72M1022 251h30M1022 256h30" stroke="#3a3a3a"/>
            <path d="M1130 195h60v59h-60z"/><path d="M1130 250h60M1130 254h60" stroke="#2a6f74"/>
          </g>
          <!-- kitchen -->
          <g stroke="#123227"><path d="M757 483v188M761 483v188M765 483v188M773 483v188"/></g>
          <path d="M851 395h147M851 401h147M851 408h147M851 414h147" stroke="#38423d"/>
          <path d="M833 714V473h185v152" stroke="#2b463d"/>
          <path d="M851 414h-49v39h-27v30M998 414h80v301M774 715h82M1078 715h-85M774 731h82M1078 731h-85" stroke="#1c5a20" stroke-width="4"/>
          <path d="M851 413h-49v39h-27v31M998 413h81v302" stroke="#93ab8c"/>
          <path d="M774 715h82M1078 715h-85M774 731h82M1078 731h-85" stroke="#3f7a3c" stroke-width="1"/>
          <path d="M774 453v-40h28M798 414q0 30-6 34l-17 4" stroke="#777"/>
          <path d="M754 483V395h97v18M754 483h20M998 413v-18h98v336h-18V715M754 483v248h20V483" stroke="#999"/>
          <path d="M881 425h84v44h-84z" stroke="#2f5448"/>
          <g stroke="#484848" stroke-width="2"><circle cx="904" cy="442" r="12" stroke-dasharray="6 3"/><circle cx="904" cy="442" r="7"/><circle cx="941" cy="442" r="12" stroke-dasharray="6 3"/><circle cx="941" cy="442" r="7"/></g>
          <rect x="784" y="505" width="41" height="58" rx="4" stroke="#31524d"/><path d="M796 538q4-16 18-18l-8 16q-5 4-10 2zM800 505q4-4 8 0" stroke="#303030"/>
          <rect x="784" y="630" width="43" height="44" rx="4" stroke="#1c322f"/>
          <path d="M1010 630v80M1015 630v78M1010 710h68M1020 710V630h55" stroke="#2a5856"/>
          <path d="M851 713h6v6M851 733h6v-20M999 713h-6v20h6" stroke="#6cb06a"/>
          <path d="M788 720h99v5h-99zM1063 720h-99v5h99z" stroke="#3f3f3f"/><path d="M788 720h30v5h-30zM1063 720h-31v5h31z" stroke="#7cb879"/>
          <g fill="#484c49" stroke="none" font-size="20"><text x="908" y="496">炒</text><text x="852" y="544">切</text><text x="851" y="646" fill="#343735">洗</text></g>
          <text x="914" y="466" font-size="9" fill="#3a3a3a" stroke="none">TUD</text>
          <!-- bar counter -->
          <path d="M1168 524h148v59h-148z" stroke="#274a42"/><text x="1218" y="559" font-size="20" fill="#555" stroke="none">吧台</text>
          <g stroke="#334f4e"><circle cx="1211" cy="499" r="18"/><circle cx="1270" cy="499" r="18"/><path d="M1192 500q-1-16 14-21h10M1289 500q1-16-14-21h-10" stroke="#286260"/></g>
          <!-- partial plans at the right edge -->
          <path d="M1817 150v144h41v-24M1865 439h-49v133h13M1829 644h-13v34h49M1865 824h-60v103" stroke="#999"/>
          <path d="M1842 150v120h16M1865 463h-36v109M1829 644v11h36M1865 842h-42v85" stroke="#225f28" stroke-width="4"/>
          <path d="M1842 150v120h16M1865 463h-36v109M1829 644v11h36M1865 842h-42v85" stroke="#8aac84"/>
          <path d="M1865 478h-10v36h10M1831 518h34M1831 572v72M1835 572v72M1826 575l8 10 5-12M1832 643h33" stroke="#2d554e"/>
          <path d="M1859 190v75M1862 200v65M1855 195l8 6" stroke="#3c3c3c"/>
          <path d="M1865 870q-22 18-19 40l6 17M1865 876q-17 16-15 34l7 17" stroke="#2f5957"/><path d="M1832 862l10-8 18-6M1833 885q8-4 6 6l-6 14 4 14" stroke="#2c222c"/>
          <!-- view cube -->
          <circle cx="1781" cy="232" r="53" stroke="#363636" stroke-width="12"/>
          <path d="M1842 176v94" stroke="#4e8a4e" stroke-width="2"/>
          <path d="M1756 206h52v51h-52z" fill="#a6a6a6"/><path d="M1765 216h34v32h-34z" fill="#969ba0"/>
          <g fill="#8c8c8c" stroke="none" font-size="18" font-weight="500" text-anchor="middle"><text x="1782" y="183">北</text><text x="1782" y="296">南</text><text x="1725" y="240">西</text><text x="1838" y="240">东</text><text x="1782" y="242" font-size="30" font-weight="400" fill="#555b62">上</text></g>
          <rect x="1758" y="319" width="48" height="17" rx="4" fill="#8e8e99" stroke="#a5a5ad"/><text x="1762" y="332" font-size="12" fill="#5f5f6a" stroke="none">WCS</text>
        </svg>
      </div>
      <div class="flex w-[23px] flex-none flex-col items-center bg-[#f7f7f7] py-[5px] text-[#444]" aria-hidden="true">
        <svg class="size-3 rotate-180"><use href="#chev"/></svg>
        <div class="mt-[127px] h-[21px] w-[19px] bg-[#dadada]"></div>
        <svg class="mt-auto size-3"><use href="#chev"/></svg>
      </div>
    </div>
    <div class="flex h-[21px] flex-none items-center bg-[#f8f8f8] text-[15px] text-[#333]">
      <div class="flex h-full items-center text-[#777] *:grid *:h-full *:w-[18px] *:place-items-center *:border-r *:border-[#ccc]">
        <button aria-label="第一个"><svg class="size-3" viewBox="0 0 12 12"><path d="M2 1v10M10 1L4 6l6 5z" fill="currentColor" stroke="currentColor"/></svg></button>
        <button aria-label="上一个"><svg class="size-3" viewBox="0 0 12 12"><path d="M9 1L3 6l6 5z" fill="currentColor"/></svg></button>
        <button aria-label="下一个"><svg class="size-3" viewBox="0 0 12 12"><path d="M3 1l6 5-6 5z" fill="currentColor"/></svg></button>
        <button aria-label="最后一个"><svg class="size-3" viewBox="0 0 12 12"><path d="M10 1v10M2 1l6 5-6 5z" fill="currentColor" stroke="currentColor"/></svg></button>
      </div>
      <div class="grid h-full w-[58px] items-center">
        <svg class="col-start-1 row-start-1 h-full w-full" viewBox="0 0 58 21" preserveAspectRatio="none"><path d="M0 0h58l-9 18H9z" fill="#000"/></svg>
        <a href="#" class="col-start-1 row-start-1 pb-1 pl-[14px] text-white">模型</a>
      </div>
      <a href="#" class="pb-1 pl-1.5">布局1</a>
      <svg class="mx-px h-full w-4" viewBox="0 0 16 21"><path d="M4 18L12 0" stroke="#555"/></svg>
      <a href="#" class="pb-1 pl-0.5">布局2</a>
      <svg class="mx-px h-full w-4" viewBox="0 0 16 21"><path d="M4 18L12 0" stroke="#555"/></svg>
      <div class="ml-auto flex h-full w-[646px] items-center justify-between bg-[#f5f5f5] pr-7" aria-hidden="true">
        <i class="h-full w-1.5 bg-[#ddd]"></i>
        <svg class="ml-[5px] size-2.5 rotate-90"><use href="#chev"/></svg>
        <i class="mr-auto ml-[298px] h-[18px] w-[21px] bg-[#d8d8d8]"></i>
        <svg class="size-2.5 -rotate-90"><use href="#chev"/></svg>
      </div>
    </div>
  </section>

  <aside class="w-8 flex-none pl-[5px]">
    <div class="h-[7px] w-[23px] border-b border-[#777] bg-[#484848]"></div>
    <div class="grid w-[23px] auto-rows-[22px] place-items-center bg-[#f5f6f8] text-[#555]">
      <button aria-label="删除"><svg class="size-[18px]" viewBox="0 0 18 18"><path d="M3 14L14 2l3 2L8 14z" fill="#a88a6c" stroke="#665"/><path d="M2 12l3-2 3 3-3 3z" fill="#b5622c"/><path d="M2 17h15" stroke="#d9b48c"/></svg></button>
      <button aria-label="复制"><svg class="size-[18px]" viewBox="0 0 18 18"><circle cx="5" cy="5" r="3" fill="none" stroke="currentColor"/><path d="M10 4h5v4" fill="none" stroke="#333" stroke-width="1.500"/><circle cx="10" cy="12" r="3" fill="#cfe6f8" stroke="#4a93c8"/><circle cx="14" cy="14" r="3" fill="#cfe6f8" stroke="#4a93c8"/></svg></button>
      <button aria-label="镜像"><svg class="size-[18px]" viewBox="0 0 18 18"><path d="M7 3v12H1z" fill="#ddd" stroke="currentColor"/><path d="M11 3v12h6z" fill="#9dc9ea" stroke="#356f9d"/><path d="M9 1v16" stroke="#555"/></svg></button>
      <button aria-label="偏移"><svg class="size-[18px]" viewBox="0 0 18 18"><path d="M1 15V9c2-1 2-7 7-7s6 5 8 5v8z" fill="#a5cbe6" stroke="#356f9d" stroke-width="1.300"/><path d="M5 15v-3c3-1 1-6 5-5 2 1 2 4 6 4" fill="none" stroke="#333"/></svg></button>
      <button aria-label="阵列"><svg class="size-[18px]" viewBox="0 0 18 18"><path d="M2 2h5v5H2zM10 2h6v5h-6zM2 10h5v6H2zM16 10h-6v6" fill="#d8ecfa" stroke="#4286bb" stroke-width="1.500"/><path d="M13 17h4v-4z" fill="#222"/></svg></button>
      <button aria-label="移动"><svg class="size-[18px]" viewBox="0 0 18 18"><path d="M9 2v14M2 9h14" stroke="currentColor" stroke-dasharray="4 2"/><path d="M9 0l3 4H6zM9 18l3-4H6zM0 9l4-3v6zM18 9l-4-3v6z" fill="#444"/><circle cx="9" cy="9" r="1.500" fill="#444"/></svg></button>
      <button aria-label="旋转"><svg class="size-[18px]" viewBox="0 0 18 18"><path d="M6 3a7 7 0 1 1-3 3" fill="none" stroke="currentColor" stroke-width="1.300"/><path d="M3 1l5 1-3 4z" fill="#444"/></svg></button>
      <button aria-label="缩放"><svg class="size-[18px]" viewBox="0 0 18 18"><path d="M1 2h16v14H1z" fill="#d8ecfa" stroke="#4286bb" stroke-width="1.300"/><path d="M1 8h9v8H1z" fill="#fff" stroke="#4286bb"/></svg></button>
      <button aria-label="拉伸"><svg class="size-[18px]" viewBox="0 0 18 18"><path d="M11 2l6 14h-6z" fill="#d8ecfa" stroke="#4286bb"/><path d="M11 2H2v14h15M5 11h6" fill="none" stroke="#667"/><path d="M9 8l4 3-4 3z" fill="#222"/></svg></button>
      <button aria-label="修剪"><svg class="size-[18px]" viewBox="0 0 18 18"><path d="M1 9h6M12 9h5" stroke="#58a0d0" stroke-width="1.300"/><path d="M5 15l6-13M7 9h5" stroke="currentColor" stroke-width="1.400"/></svg></button>
      <button aria-label="延伸"><svg class="size-[18px]" viewBox="0 0 18 18"><path d="M1 9h5M8 9h5" stroke="currentColor" stroke-width="1.400"/><path d="M11 14l5-11" stroke="#4a93c8" stroke-width="1.300"/></svg></button>
      <button aria-label="打断于点"><svg class="size-[18px]" viewBox="0 0 18 18"><path d="M16 4H2v11h14" fill="none" stroke="currentColor" stroke-width="1.200"/><path d="M13 2l4 2-4 3z" fill="#444"/></svg></button>
      <button aria-label="打断"><svg class="size-[18px]" viewBox="0 0 18 18"><path d="M5 4H2v11h14V4h-3" fill="#e7f3fb" stroke="#3a6a94" stroke-width="1.300"/><path d="M5 2h3v3H5zM11 2h3v3h-3z" fill="#333"/></svg></button>
      <button aria-label="合并"><svg class="size-[18px]" viewBox="0 0 18 18"><path d="M2 9h14" stroke="#444"/><path d="M4 6l5 3-5 3zM14 6L9 9l5 3z" fill="#44759c"/></svg></button>
      <button aria-label="倒角"><svg class="size-[18px]" viewBox="0 0 18 18"><path d="M2 16V8l6-6h8v14z" fill="#fff" stroke="currentColor" stroke-width="1.200"/><path d="M2 8l6-6" stroke="#4a93c8"/></svg></button>
      <button aria-label="圆角"><svg class="size-[18px]" viewBox="0 0 18 18"><path d="M2 16v-5q1-9 10-9h4v14z" fill="#f2f9ff" stroke="currentColor" stroke-width="1.200"/><path d="M2 11q1-9 10-9" fill="none" stroke="#4a93c8" stroke-width="1.300"/></svg></button>
      <button aria-label="光顺曲线"><svg class="size-[18px]" viewBox="0 0 18 18"><path d="M1 16V8c5-3 6 6 9 5s2-7 6-10v9" fill="none" stroke="#4d7594" stroke-width="1.200"/><path d="M1 6h3v3H1zM14 2h3v3h-3z" fill="#333"/></svg></button>
      <button aria-label="分解"><svg class="size-[18px]" viewBox="0 0 18 18"><path d="M4 6l5-3 6 2v8l-5 3-6-2zM4 6l6 2v8M10 8l5-3" fill="#9fd0f2" stroke="#2f78ae" stroke-width="1.300"/><path d="M2 5Q0 9 2 14M16 4q3 5 0 10" fill="none" stroke="#2f78ae"/></svg></button>
    </div>
    <div class="h-2.5 w-[23px] border-y border-[#777] bg-[#555]"></div>
    <div class="grid w-[23px] auto-rows-[22px] place-items-center bg-[#f5f5f5] pb-1 text-[#666]">
      <button aria-label="前置"><svg class="size-[18px]"><use href="#order"/></svg></button>
      <button aria-label="后置"><svg class="size-[18px]"><use href="#orderb"/></svg></button>
      <button aria-label="置于对象之上"><svg class="size-[18px]"><use href="#orderc"/></svg></button>
      <button aria-label="置于对象之下"><svg class="size-[18px]"><use href="#orderd"/></svg></button>
      <button aria-label="注释前置" class="border-t border-[#bbb] pt-1"><svg class="size-[18px]" viewBox="0 0 18 18"><path d="M1 3h7M1 6h7M4 9v6h12V4M10 4h4" fill="none" stroke="currentColor" stroke-width="1.600"/><path d="M14 18h4v-4z" fill="#111"/></svg></button>
      <button aria-label="填充后置" class="pt-1"><svg class="size-[18px]" viewBox="0 0 18 18"><path d="M1 2h10v9H1z" fill="#bbb" stroke="currentColor"/><path d="M5 14h12M14 5v12" stroke="currentColor" stroke-width="1.400"/></svg></button>
    </div>
  </aside>
</main>

<!-- Command line -->
<section class="mt-[5px] flex h-[54px] shrink-0 font-['Liberation_Mono','Noto_Sans_CJK_SC',monospace]" aria-label="命令行">
  <div class="flex w-[29px] flex-none flex-col items-center justify-between bg-linear-to-b from-[#777] to-[#484848] pt-1 text-white">
    <i class="h-2 w-[22px] border-y border-dotted border-[#aaa]"></i>
    <button aria-label="关闭命令行"><svg class="size-3" viewBox="0 0 12 12"><path d="M1 1l10 10M11 1L1 11" stroke="currentColor" stroke-width="2.500"/></svg></button>
    <svg class="h-2 w-3" viewBox="0 0 12 8"><path d="M1 6h3M7 1q4 1 3 7" fill="none" stroke="currentColor" stroke-width="2"/></svg>
  </div>
  <div class="min-w-0 flex-1 border-r border-[#888]">
    <div class="flex h-[26px] items-center border-b border-[#bbb] bg-[#d3d3d3] pl-1 text-[19px] whitespace-pre">命令: *取消*</div>
    <label class="flex h-7 items-center gap-1 bg-white pt-0.5 pl-[5px] text-[#999]">
      <svg class="size-5" viewBox="0 0 20 20"><rect x="1" y="1" width="18" height="18" rx="2" fill="#eee" stroke="#bbb"/><path d="M4 6l4 4-4 4M10 15h6" fill="none" stroke="#777" stroke-width="1.500"/></svg>
      <svg class="size-1.5"><use href="#dot"/></svg>
      <input aria-label="命令" placeholder="键入命令" class="min-w-0 flex-1 pl-2 text-[20px] italic outline-none placeholder:text-[#b5b5b5]">
    </label>
  </div>
</section>

<!-- Status bar -->
<footer class="mt-px flex h-[22px] shrink-0 items-stretch bg-linear-to-b from-[#8a8a8a] to-[#747474] font-['Liberation_Mono','Noto_Sans_CJK_SC',monospace] text-[13px] text-[#333]">
  <output class="w-[159px] flex-none bg-linear-to-b from-[#a8a8a8] to-[#8c8c8c] pt-0.5 pl-3 whitespace-pre">-15442, 41043, 0</output>
  <div class="flex *:border-l *:border-[#777] *:bg-[#b9b9b9] *:px-[2px] *:pt-0.5">
    <button class="w-11">INFER</button><button class="w-9 text-[15px]">捕捉</button><button class="w-9 text-[15px]">栅格</button><button class="w-9 bg-[#bfe3e8]! text-[15px] text-[#134]">正交</button><button class="w-[37px] text-[15px]">极轴</button><button class="w-[65px] bg-[#bfe3e8]! text-[15px] text-[#134]">对象捕捉</button><button class="w-[63px]">3DOSNAP</button><button class="w-[65px] bg-[#bfe3e8]! text-[15px] text-[#134]">对象追踪</button><button class="w-[39px]">DUCS</button><button class="w-[29px] bg-[#bfe3e8]! text-[#134]">DYN</button><button class="w-[37px] text-[15px]">线宽</button><button class="w-[29px] bg-[#bfe3e8]! text-[#134]">TPY</button><button class="w-[22px]">QP</button><button class="w-[21px]">SC</button><button class="w-[22px]">AM</button>
  </div>
  <div class="ml-auto flex text-[#444] *:flex *:items-center *:justify-center *:border-l *:border-[#888] *:bg-[#b5b5b5]">
    <button class="w-9 pt-0.5 text-[14px] text-[#222]">模型</button>
    <button aria-label="布局" class="w-[23px]"><svg class="size-4" viewBox="0 0 16 16"><path d="M2 1h11v11H2z" fill="#eee" stroke="currentColor"/><path d="M1 14h14M5 11l5-6v6z" fill="none" stroke="currentColor"/></svg></button>
    <button aria-label="快速查看" class="w-[22px]"><svg class="size-4" viewBox="0 0 16 16"><path d="M1 2h6v7H1zM9 2h6v7H9zM1 12h14" fill="#eee" stroke="currentColor"/></svg></button>
    <i class="w-[23px] bg-[#747474]!"></i>
    <button class="w-[66px] gap-0.5 pt-0.5 text-[14px] text-[#222]"><svg class="size-4" viewBox="0 0 16 16"><path d="M8 1v7M8 8l-6 6M8 8l6 6" stroke="#eee" stroke-width="3"/><path d="M6 1h4v7l5 6-2 1-5-5-5 5-2-1 5-6z" fill="none" stroke="#555"/></svg>1:60<svg class="size-2"><use href="#dot"/></svg></button>
    <button aria-label="注释可见性" class="w-[23px]"><svg class="size-4" viewBox="0 0 16 16"><path d="M6 1h3v7l5 6-2 1-4-5-5 5-2-1 5-6z" fill="#eee" stroke="#555"/><circle cx="13" cy="6" r="3" fill="#ecd878"/></svg></button>
    <button aria-label="自动缩放" class="w-[22px]"><svg class="size-4" viewBox="0 0 16 16"><path d="M6 1h3v7l5 6-2 1-4-5-5 5-2-1 5-6z" fill="#ccc" stroke="#999"/></svg></button>
    <button aria-label="切换工作空间" class="w-[30px]"><svg class="size-[18px]"><use href="#gear"/></svg></button>
    <button aria-label="锁定" class="w-[22px]"><svg class="size-4" viewBox="0 0 16 16"><path d="M2 7h8v8H2zM8 7V4a3 3 0 0 1 6 0v3" fill="#eee" stroke="currentColor" stroke-width="1.300"/></svg></button>
    <button aria-label="硬件加速" class="w-[22px]"><svg class="size-4" viewBox="0 0 16 16"><circle cx="8" cy="8" r="5" fill="#ccc" stroke="#777"/><path d="M5 4l3 5 5-5" fill="none" stroke="#666" stroke-width="2"/></svg></button>
    <button aria-label="隔离对象" class="w-[26px] bg-[#7e7e7e]!"><svg class="size-[18px]" viewBox="0 0 16 16"><path d="M3 1h6v8H3z" fill="#d7e8a8" stroke="#555"/><path d="M2 12l5-4v3h5V7l3 4-3 4H7z" fill="#b4d15b" stroke="#666" stroke-width=".7"/></svg></button>
    <button aria-label="灯泡" class="w-[20px] border-l-0! bg-[#7e7e7e]!"><svg class="size-[18px]"><use href="#bulb"/></svg></button>
    <i class="w-[18px] text-[#222]"><svg class="size-1.5"><use href="#dot"/></svg></i>
    <button aria-label="全屏显示" class="w-[24px]"><svg class="size-3.5" viewBox="0 0 14 14"><path d="M1 1h12v12H1z" fill="#fff" stroke="#555"/><path d="M1 1h12v3H1z" fill="#777"/></svg></button>
  </div>
</footer>

<!-- Windows taskbar -->
<div class="flex h-[50px] shrink-0 items-stretch border-b border-[#bfeccf] bg-linear-to-r from-[#dbeef6] to-[#dfe5f3] text-[#222]">
  <div class="flex flex-none *:mx-[5px] *:grid *:w-[52px] *:place-items-center *:border-b-3 *:border-transparent">
    <button aria-label="开始"><svg class="h-5 w-[22px]" viewBox="0 0 22 20"><path d="M0 3l9-1v8H0zM10 2l12-2v10H10zM0 11h9v7l-9-1zM10 11h12v9l-12-2z" fill="#111"/></svg></button>
    <button aria-label="搜索工具"><svg class="size-7" viewBox="0 0 28 28"><path d="M2 2h24v19H2z" fill="#edf4f8" stroke="#567"/><path d="M2 2h24v3H2z" fill="#4b7890"/><circle cx="15" cy="12" r="6.500" fill="#dfe8ec" stroke="#9aa"/><path d="M10 17l-6 8" stroke="#bd7c63" stroke-width="3"/></svg></button>
    <button aria-label="QQ"><svg class="size-7" viewBox="0 0 28 28"><path d="M7 10C7 3 10 0 14 0s7 3 7 10c4 5 5 10 3 12l-3-2c-3 6-11 6-14 0l-3 2c-2-2-1-7 3-12z" fill="#161616"/><ellipse cx="14" cy="19" rx="6" ry="7" fill="#fff"/><ellipse cx="11.500" cy="6" rx="1.800" ry="2.500" fill="#fff"/><ellipse cx="16.500" cy="6" rx="1.800" ry="2.500" fill="#fff"/><path d="M9 10h10l-5 3z" fill="#f4a416"/><path d="M6 13q8 5 16 0v4q-8 4-15 0z" fill="#e3202c"/><path d="M6 26h6M16 26h6" stroke="#f4a416" stroke-width="3"/></svg></button>
    <button aria-label="Photoshop"><span class="grid size-7 place-items-center rounded-md border-2 border-[#1f7f9e] bg-[#05222f] text-[14px] leading-none font-bold text-[#dff2fb]">Ps</span></button>
    <button aria-label="浏览器"><svg class="size-7" viewBox="0 0 28 28"><path d="M1 19C-1 8 8 3 15 4c4-3 8-4 11-3-3 1-3 5-2 8 2 8-3 17-12 16C6 25 2 23 1 19z" fill="#69b836"/><path d="M7 13q6-6 13-1-7 0-10 5" fill="#d7f0b9"/><circle cx="19" cy="19" r="7" fill="#555"/><path d="M15 16h5v6h-5zM20 18l4-2v6l-4-2z" fill="#ddd"/></svg></button>
    <button aria-label="3ds Max"><svg class="size-7" viewBox="0 0 28 28"><rect width="28" height="28" rx="3" fill="#e9f4f6"/><path d="M8 4h10v2l-4 5c8 1 5 10-2 10-3 0-5-1-6-2" fill="none" stroke="#14858c" stroke-width="4"/><path d="M15 25h8" stroke="#7bb9bd" stroke-width="2"/></svg></button>
    <button aria-label="云盘"><svg class="size-[30px]" viewBox="0 0 30 30"><rect width="30" height="30" rx="6" fill="#4a90ee"/><path d="M12 6h6l5 4v6a8 8 0 0 1-16 0v-6z" fill="none" stroke="#fff" stroke-width="2" stroke-linejoin="round"/><path d="M11 16q4 6 8 0a4 4 0 0 0-8 0z" fill="none" stroke="#fff" stroke-width="2"/></svg></button>
    <button aria-label="文件资源管理器" class="border-[#08779b]!"><svg class="size-7" viewBox="0 0 28 28"><path d="M1 3h10l2 4h14v18H1z" fill="#f7cf5b"/><path d="M1 3h10l2 4H1z" fill="#b58a1c"/><path d="M6 27V15h16v12h-4v-7h-8v7z" fill="#4a8ec4"/></svg></button>
    <button aria-label="AutoCAD" class="mx-0.5! w-[58px]! border-[#08779b]! bg-white"><svg class="size-[30px]" viewBox="0 0 30 30"><path d="M1 1h20l8 8v20H1z" fill="#d8434a"/><path d="M21 1l8 8h-8z" fill="#f2a0a0"/><path d="M6 22l7-16h4l7 15-5 1-2-4h-5z" fill="#7c0d12"/><path d="M13 6l3 8h-5z" fill="#b81b20"/></svg></button>
    <button aria-label="图表" class="border-[#08779b]!"><svg class="size-7" viewBox="0 0 28 28"><rect width="28" height="28" rx="4" fill="#fff"/><path d="M5 20l3-6M12 20l6-12M19 20l3-5" stroke="#15b38d" stroke-width="4" stroke-linecap="round"/><circle cx="11" cy="7" r="2.500" fill="#f29a3a"/></svg></button>
    <button aria-label="飞书" class="border-[#08779b]!"><svg class="size-7"><use href="#bird"/></svg></button>
    <button aria-label="录屏" class="border-[#08779b]!"><svg class="size-7" viewBox="0 0 28 28"><rect width="28" height="28" rx="6" fill="#f0902c"/><rect x="6" y="8" width="16" height="14" rx="3" fill="#fff"/><circle cx="14" cy="15" r="3" fill="#f0902c"/><path d="M9 4l3 4M19 4l-3 4" stroke="#fff" stroke-width="2"/></svg></button>
  </div>
  <div class="ml-auto flex items-center">
    <div class="mr-[38px] h-8 w-[242px] self-end bg-black"></div>
    <div class="w-[60px] text-center text-[15px] leading-[22px] whitespace-nowrap">32℃<br>CPU温度</div>
    <div class="ml-3 flex items-center *:grid *:w-[30px] *:place-items-center">
      <button aria-label="显示隐藏的图标"><svg class="size-4" viewBox="0 0 16 16"><path d="M1 12l7-7 7 7" fill="none" stroke="currentColor" stroke-width="1.500"/></svg></button>
      <button aria-label="麦克风"><svg class="h-5 w-3.5" viewBox="0 0 14 20"><rect x="2" y="0" width="10" height="14" rx="2" fill="#111"/><path d="M1 10q0 6 6 6t6-6M7 16v3M3 19h8" fill="none" stroke="#111" stroke-width="1.500"/></svg></button>
      <button aria-label="飞书"><svg class="size-[18px]"><use href="#bird"/></svg></button>
      <button aria-label="音量"><svg class="size-5" viewBox="0 0 20 20"><path d="M1 7h3l5-4v14l-5-4H1z" fill="none" stroke="currentColor" stroke-width="1.500"/><path d="M12 7q2 3 0 6M14 5q4 5 0 10" fill="none" stroke="#555"/><path d="M17 3q5 7 0 14" fill="none" stroke="#bbb"/></svg></button>
      <button aria-label="网络"><svg class="size-5" viewBox="0 0 20 20"><path d="M4 4h15v10H4zM1 2h4v5H1zM3 7v10h9M11 14v4" fill="none" stroke="currentColor" stroke-width="1.400"/></svg></button>
      <button aria-label="输入法" class="text-[20px] text-[#8a8f98]">英</button>
    </div>
    <button aria-label="搜狗输入法" class="ml-3"><svg class="size-5"><use href="#sogou"/></svg></button>
    <div class="ml-[18px] w-[80px] text-center text-[16px] leading-[22px] whitespace-nowrap">10:07<br>2025/3/6</div>
    <button aria-label="通知" class="mr-[31px] ml-[22px]"><svg class="size-5" viewBox="0 0 20 20"><path d="M0 1h20v13h-6l-5 5v-5H0z" fill="#111"/><path d="M4 5h12M4 8h12M4 11h8" stroke="#dfe5f3" stroke-width="1.200"/><circle cx="16" cy="15" r="4" fill="#111" stroke="#dfe5f3"/></svg></button>
  </div>
</div>

<!-- Floating input-method bar -->
<div class="absolute right-[467px] bottom-[50px] z-10 flex h-8 w-[240px] items-center rounded-r border border-[#ddd] bg-white pl-[29px] text-[#1f7fd0] *:grid *:w-[30px] *:place-items-center">
  <svg class="absolute -top-1.5 -left-[11px] h-[38px] w-[38px]!"><use href="#sogou"/></svg>
  <button class="text-[18px] font-bold">英</button>
  <button aria-label="标点"><svg class="size-4" viewBox="0 0 16 16"><circle cx="3" cy="4" r="2" fill="currentColor"/><path d="M11 8h4q0 5-4 7 1-3 0-7z" fill="currentColor"/></svg></button>
  <button aria-label="语音"><svg class="size-5" viewBox="0 0 20 20"><rect x="6" y="1" width="8" height="12" rx="4" fill="currentColor"/><path d="M3 9q0 7 7 7t7-7M10 16v3" fill="none" stroke="currentColor" stroke-width="1.500"/></svg></button>
  <button aria-label="软键盘"><svg class="size-5" viewBox="0 0 20 20"><rect x="1" y="3" width="18" height="14" rx="2" fill="#e3f1fc" stroke="currentColor" stroke-width="1.500"/><path d="M4 7h12M4 10h12M6 14h8M8 5v6M12 5v6" stroke="currentColor" stroke-width="1.200"/></svg></button>
  <button aria-label="皮肤"><svg class="size-6" viewBox="0 0 24 24"><path d="M6 6l3 1q2 3 5 0l3-1 4 5-3 3-1-1v9H7v-9l-2 1-4-4z" fill="#8f7bec"/><path d="M6 6l3 1q2 3 5 0l3-1 4 5-3 3-1-1H7l-2 1-4-4z" fill="#d66fc4"/><circle cx="20" cy="4" r="3.500" fill="#f0544f"/></svg></button>
  <button aria-label="工具箱"><svg class="size-[18px]" viewBox="0 0 18 18"><rect x="1" y="1" width="7" height="7" rx="2" fill="currentColor"/><rect x="11" y="2" width="5" height="5" rx="1" fill="none" stroke="currentColor" stroke-width="2"/><rect x="1" y="10" width="7" height="7" rx="2" fill="currentColor"/><rect x="10" y="10" width="7" height="7" rx="2" fill="currentColor"/></svg></button>
  <button aria-label="表情"><svg class="size-5" viewBox="0 0 20 20"><path d="M1 6l8-1 3 3-2 4H5L1 9z" fill="#a8502a"/><path d="M10 6l7-1v6l-5 4-2-2z" fill="#e2863f"/><circle cx="17" cy="6" r="1.500" fill="#f4c23d"/></svg></button>
</div>

<!-- Video captions over the canvas -->
<div class="pointer-events-none absolute inset-x-0 top-[222px] text-center font-['Noto_Sans_CJK_SC',sans-serif] text-[77px] leading-[78px] font-black whitespace-nowrap text-[#ffe60a]">
  <p>口袋门</p>
  <p><span class="font-['Liberation_Sans',sans-serif] text-[84px] leading-none font-bold">CAD</span>施工图怎么画<span class="pr-8 font-['Liberation_Sans',sans-serif] text-[84px] leading-none font-bold">?</span></p>
</div>
<div class="pointer-events-none absolute inset-x-0 top-[578px] text-center font-['Noto_Sans_CJK_SC',sans-serif] text-[45px] leading-[46px] font-medium whitespace-nowrap text-[#c5e2fc] text-shadow-[0_0_3px_#000,0_0_3px_#000]">
  <p>室内设计CAD平面</p>
  <p>口袋门、移门、推拉门画法</p>
</div>
</body>
</html>
